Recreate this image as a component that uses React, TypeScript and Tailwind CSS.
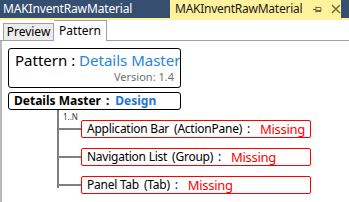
import React from 'react';

const font = { fontFamily: '"Noto Sans", "Open Sans", sans-serif' };

const Node: React.FC<{ label: string; kind: string }> = ({ label, kind }) => (
  <div className="flex items-center">
    <div className="w-[22px] h-[2px] bg-[#808080] shrink-0" />
    <div className="w-[230px] h-[18px] shrink-0 border border-[#ff0000] rounded-[2px] flex items-center pl-[5px] text-[12px] text-black leading-none whitespace-nowrap tracking-[-0.25px]">
      <span>{label}</span>
      <span className="ml-[5px]">({kind})</span>
      <span className="ml-[5px]">:</span>
      <span className="ml-[10px] text-[13px] text-[#ff0000] tracking-[-0.3px]">Missing</span>
    </div>
  </div>
);

export default function App() {
  return (
    <div className="w-[349px] h-[202px] bg-white overflow-hidden flex flex-col" style={font}>
      {/* document tab strip */}
      <div className="h-[18px] bg-[#364e6f] flex items-stretch shrink-0">
        <div className="w-[170px] pl-[3px] flex items-center text-[12px] text-white whitespace-nowrap tracking-[-0.15px]">MAKInventRawMaterial</div>
        <div className="w-[171px] bg-[#fff29d] flex items-center pl-[5px] text-[12px] text-[#1b1b1b] whitespace-nowrap">
          <span className="tracking-[-0.25px]">MAKInventRawMaterial</span>
          <svg className="ml-[10px]" width="11" height="11" viewBox="0 0 11 11">
            <path d="M1 5.5h3M4 2.5v6M4 3.5h5v4H4M4 6.5h5" stroke="#6f6438" strokeWidth="1" fill="none" />
          </svg>
          <svg className="ml-[8px]" width="10" height="10" viewBox="0 0 10 10">
            <path d="M1 1l8 8M9 1l-8 8" stroke="#6f6438" strokeWidth="1.4" />
          </svg>
        </div>
        <div className="flex-1" />
      </div>
      <div className="h-[2px] bg-[#fff29d] shrink-0" />

      {/* inner tabs */}
      <div className="flex items-end h-[21px] shrink-0">
        <div className="w-[3px] border-b border-[#a0a0a0] h-full" />
        <div className="w-[51px] h-[18px] bg-[#ececec] border border-[#a0a0a0] flex items-center justify-center text-[12px] text-black">
          Preview
        </div>
        <div className="w-[53px] h-[21px] bg-white border border-b-0 border-l-0 border-[#a0a0a0] flex items-center justify-center text-[12px] text-black">
          Pattern
        </div>
        <div className="flex-1 border-b border-[#a0a0a0] h-full" />
      </div>

      {/* designer surface */}
      <div className="flex-1 border-l-2 border-[#b8b8b8] pl-[6px] pt-[7px] flex flex-col">
        <div className="w-[173px] h-[40px] border border-black rounded-[3px] flex flex-col px-[6px] pt-[1px]">
          <div className="text-[15px] leading-[20px] whitespace-nowrap">
            <span className="text-black">Pattern : </span>
            <span className="text-[#2586d9]">Details Master</span>
          </div>
          <div className="text-[11px] leading-[14px] text-right text-[#707070]">Version: 1.4</div>
        </div>
        <div className="mt-[4px] w-[173px] h-[18px] border border-black rounded-[3px] flex items-center pl-[5px] text-[12px] font-bold leading-none whitespace-nowrap">
          <span className="text-black">Details Master</span>
          <span className="ml-[5px] text-black">:</span>
          <span className="ml-[6px] text-[#1a78d2]">Design</span>
        </div>
        <div className="ml-[49px] flex">
          <div className="w-[2px] h-[78px] bg-[#808080]" />
          <div className="flex flex-col relative">
            <span className="absolute left-[4px] top-[3px] text-[8px] leading-none text-[#333]">1..N</span>
            <div className="mt-[10px] flex flex-col gap-[10px]">
              <Node label="Application Bar" kind="ActionPane" />
              <Node label="Navigation List" kind="Group" />
              <Node label="Panel Tab" kind="Tab" />
            </div>
          </div>
        </div>
      </div>
    </div>
  );
}
